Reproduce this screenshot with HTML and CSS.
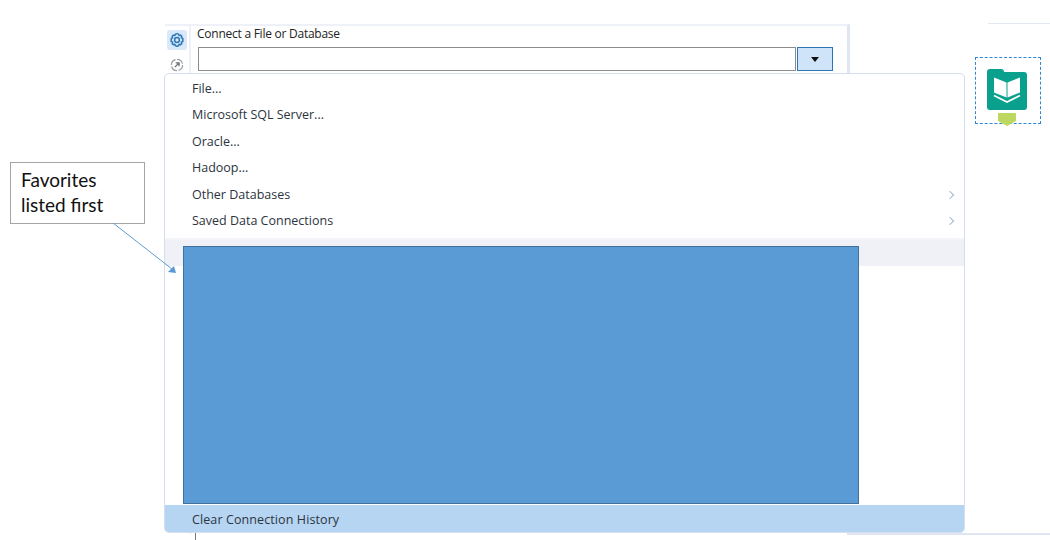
FILE: index.html
```html
<!DOCTYPE html>
<html lang="en">
<head>
<meta charset="utf-8">
<title>Connect a File or Database</title>
<link rel="stylesheet" href="styles.css">
</head>
<body>
<div class="stage">
  <section class="panel">
    <aside class="rail">
      <span class="rail-btn active">
        <svg width="16" height="16" viewBox="0 0 16 16" fill="none"><path d="M8 1.600l1.600.5.5 1.500 1.500-.5 1.200 1.100-.5 1.600 1.500.6.100 1.600-.1 1.600-1.500.4.500 1.600-1.200 1.200-1.500-.5-.5 1.500-1.600.4-1.600-.4-.5-1.500-1.500.5-1.200-1.200.5-1.600-1.500-.4V8l.1-1.600 1.400-.6-.5-1.600 1.200-1.100 1.500.5.5-1.500z" stroke="#2a78b8" stroke-width="1.500" stroke-linejoin="round"/><circle cx="8" cy="8" r="2.400" stroke="#2a78b8" stroke-width="1.500"/></svg>
      </span>
      <span class="rail-btn">
        <svg width="14" height="14" viewBox="0 0 14 14" fill="none"><circle cx="7" cy="7" r="5.600" stroke="#9a9ea4" stroke-width="1.200" stroke-dasharray="7 1.600"/><path d="M4.800 9.200L9 5M5.800 4.900H9.100V8.200" stroke="#6a7079" stroke-width="1.200"/></svg>
      </span>
    </aside>
    <div class="config">
      <label class="field-label">Connect a File or Database</label>
      <div class="field-row">
        <div class="field-input"></div>
        <button class="field-btn" type="button"><span class="caret"></span></button>
      </div>
    </div>
  </section>

  <div class="canvas-rule"></div>
  <div class="panel-bottom-rule"></div>
  <div class="panel-tick"></div>

  <div class="tool">
    <svg class="tool-icon" width="40" height="41" viewBox="0 0 40 41">
      <path d="M3 0h11a3 3 0 0 1 3 3h20a3 3 0 0 1 3 3v32a3 3 0 0 1-3 3H3a3 3 0 0 1-3-3V3a3 3 0 0 1 3-3z" fill="#0aa08e"/>
      <path d="M7 8.500l12.500 5v15L7 23.500zM33 8.500l-12.500 5v15L33 23.500z" fill="#fff"/>
      <path d="M7 26.500l13 6.500 13-6.500" fill="none" stroke="#fff" stroke-width="1.800"/>
    </svg>
    <svg class="tool-anchor" width="18" height="13" viewBox="0 0 18 13"><path d="M1 0h16a1 1 0 0 1 1 1v7l-9 5-9-5V1a1 1 0 0 1 1-1z" fill="#bdd860"/></svg>
  </div>

  <div class="menu">
    <ul class="menu-list">
      <li class="menu-item">File...</li>
      <li class="menu-item">Microsoft SQL Server...</li>
      <li class="menu-item">Oracle...</li>
      <li class="menu-item">Hadoop...</li>
      <li class="menu-item">Other Databases<span class="chevron"></span></li>
      <li class="menu-item">Saved Data Connections<span class="chevron"></span></li>
    </ul>
    <div class="menu-sep"></div>
    <div class="history">
      <div class="history-hover"></div>
      <div class="redaction"></div>
    </div>
    <div class="menu-clear">Clear Connection History</div>
  </div>

  <div class="callout">Favorites<br>listed first</div>
  <svg class="arrow" width="80" height="60" viewBox="0 0 80 60"><path d="M1 0L60 46" stroke="#5b9bd5" stroke-width="1"/><path d="M64 50L56 49 62 43z" fill="#5b9bd5"/></svg>
</div>
</body>
</html>
```

FILE: styles.css
```css
* { box-sizing: border-box; }
html, body { margin: 0; padding: 0; background: #fff; }
.stage {
  position: relative;
  width: 1050px;
  height: 540px;
  overflow: hidden;
  background: #fff;
  font-family: "Open Sans", "Noto Sans", sans-serif;
  color: #2c3440;
}
.panel {
  position: absolute;
  left: 165px;
  top: 24px;
  width: 685px;
  height: 510px;
  display: flex;
  border-top: 2px solid #eef1f8;
  border-right: 3px solid #dfe5f2;
}
.rail {
  width: 27px;
  display: flex;
  flex-direction: column;
  align-items: center;
  gap: 5px;
  padding-top: 4px;
  border-right: 2px solid #eef1f8;
}
.rail-btn {
  width: 20px;
  height: 20px;
  border-radius: 3px;
  display: flex;
  align-items: center;
  justify-content: center;
}
.rail-btn.active { background: #d9e9f9; }
.config { flex: 1; padding: 0 14px 0 6px; }
.field-label {
  display: block;
  height: 21px;
  font-family: "Open Sans", sans-serif;
  font-size: 12px;
  line-height: 15px;
  letter-spacing: -0.25px;
  color: #222;
}
.field-row { display: flex; gap: 1px; margin-left: 1px; }
.field-input {
  width: 598px;
  height: 24px;
  background: #fff;
  border: 1px solid #8c8c8c;
}
.field-btn {
  width: 36px;
  height: 24px;
  padding: 0;
  background: #cfe4f9;
  border: 1px solid #2e75b6;
  display: flex;
  align-items: center;
  justify-content: center;
}
.caret {
  width: 0;
  height: 0;
  border-left: 4px solid transparent;
  border-right: 4px solid transparent;
  border-top: 5px solid #111;
}
.canvas-rule {
  position: absolute;
  left: 988px;
  top: 23px;
  width: 62px;
  height: 1px;
  background: #e2e9f5;
}
.panel-bottom-rule {
  position: absolute;
  left: 847px;
  top: 533px;
  width: 203px;
  height: 2px;
  background: #dfe5f2;
}
.panel-tick {
  position: absolute;
  left: 195px;
  top: 533px;
  width: 1px;
  height: 7px;
  background: #777;
}
.tool {
  position: absolute;
  left: 975px;
  top: 57px;
  width: 66px;
  height: 67px;
  border: 1px dashed #2e86d9;
}
.tool-icon { position: absolute; left: 11px; top: 11px; }
.tool-anchor { position: absolute; left: 22px; top: 55px; }
.menu {
  position: absolute;
  left: 164px;
  top: 73px;
  width: 801px;
  height: 460px;
  display: flex;
  flex-direction: column;
  background: #fff;
  border: 1px solid #d5deef;
  border-radius: 5px;
  overflow: hidden;
}
.menu-list {
  list-style: none;
  margin: 0;
  padding: 1.5px 0 0;
}
.menu-item {
  position: relative;
  height: 26.5px;
  line-height: 26px;
  padding-left: 27px;
  font-size: 12.5px;
}
.chevron {
  position: absolute;
  right: 11px;
  top: 10px;
  width: 6px;
  height: 6px;
  border-top: 1.500px solid #a9b6d3;
  border-right: 1.500px solid #a9b6d3;
  transform: rotate(45deg);
}
.menu-sep {
  height: 2px;
  margin-top: 3.500px;
  background: #f4f5f9;
}
.history { position: relative; flex: 1; }
.history-hover { height: 26px; background: #f0f1f6; }
.redaction {
  position: absolute;
  left: 18px;
  top: 6px;
  width: 676px;
  height: 258px;
  background: #5b9bd5;
  border: 1px solid #41719c;
}
.menu-clear {
  height: 27px;
  line-height: 29px;
  padding-left: 27px;
  font-size: 12.5px;
  letter-spacing: 0.1px;
  background: #b6d5f2;
}
.callout {
  position: absolute;
  left: 10px;
  top: 162px;
  width: 135px;
  height: 62px;
  padding: 4px 10px;
  background: #fff;
  border: 1px solid #a5a5a5;
  font-family: Lato, sans-serif;
  font-size: 19px;
  line-height: 25px;
  color: #111;
}
.arrow { position: absolute; left: 112px; top: 223px; }
```
